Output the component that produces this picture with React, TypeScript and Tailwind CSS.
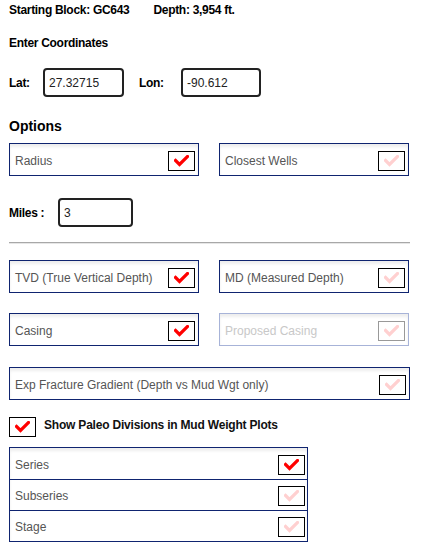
import React from "react";

const font = { fontFamily: '"Liberation Sans", Arial, sans-serif' };

function Check({ on, faded }: { on: boolean; faded?: boolean }) {
  return (
    <div
      className={`w-[27px] h-[20px] border flex items-center justify-center bg-white shrink-0 ${
        faded ? "border-[#999]" : "border-black"
      }`}
    >
      <svg width="15" height="12" viewBox="0 0 15 12">
        <polyline
          points="1.5,5.5 5.5,9.5 13.5,1.5"
          fill="none"
          stroke={on ? "#ff0000" : "#ffd0d0"}
          strokeWidth="3.2"
          strokeLinecap="square"
        />
      </svg>
    </div>
  );
}

function OptionBox({
  label,
  on,
  disabled,
  wide,
}: {
  label: string;
  on: boolean;
  disabled?: boolean;
  wide?: boolean;
}) {
  return (
    <div
      className={`${wide ? "w-[401px]" : "w-[190px]"} h-[33px] border flex items-center justify-between pl-[5px] pr-[3px] pt-[3px] shadow-[inset_0_3px_3px_rgba(0,0,0,0.07)] ${
        disabled ? "border-[#a7b3d8]" : "border-[#0f2470]"
      }`}
    >
      <span className={`text-[12px] ${disabled ? "text-[#c8c8c8]" : "text-[#555]"}`}>{label}</span>
      <Check on={on} faded={disabled} />
    </div>
  );
}

function Input({ value, w }: { value: string; w: string }) {
  return (
    <div className={`${w} h-[29px] border-2 border-[#222] rounded-[4px] flex items-center px-[4px] text-[12px] font-normal tracking-normal text-[#222]`}>
      {value}
    </div>
  );
}

export default function App() {
  return (
    <div className="w-[438px] h-[545px] bg-white pl-[9px] text-black overflow-hidden" style={font}>
      <div className="h-5 flex items-center text-[12px] font-bold tracking-[-0.3px]">
        <span>Starting Block: GC643</span>
        <span className="ml-[24px]">Depth: 3,954 ft.</span>
      </div>
      <div className="mt-[13px] h-5 flex items-center text-[12px] font-bold tracking-[-0.3px]">Enter Coordinates</div>

      <div className="mt-[15px] flex items-center text-[12px] font-bold tracking-[-0.3px]">
        <span className="w-[34px]">Lat:</span>
        <Input value="27.32715" w="w-[81px]" />
        <span className="ml-[15px] w-[42px]">Lon:</span>
        <Input value="-90.612" w="w-[80px]" />
      </div>

      <div className="mt-[19px] h-5 flex items-center text-[14px] font-bold">Options</div>

      <div className="mt-[7px] flex gap-[20px]">
        <OptionBox label="Radius" on />
        <OptionBox label="Closest Wells" on={false} />
      </div>

      <div className="mt-[22px] flex items-center text-[12px] font-bold tracking-[-0.3px]">
        <span className="w-[49px]">Miles :</span>
        <Input value="3" w="w-[75px]" />
      </div>

      <div className="mt-[15px] w-[401px] h-[2px] bg-[#a8a8a8] border-b border-[#e6e6e6]" />

      <div className="mt-[16px] flex gap-[20px]">
        <OptionBox label="TVD (True Vertical Depth)" on />
        <OptionBox label="MD (Measured Depth)" on={false} />
      </div>

      <div className="mt-[20px] flex gap-[20px]">
        <OptionBox label="Casing" on />
        <OptionBox label="Proposed Casing" on={false} disabled />
      </div>

      <div className="mt-[21px]">
        <OptionBox label="Exp Fracture Gradient (Depth vs Mud Wgt only)" on={false} wide />
      </div>

      <div className="mt-[17px] flex items-center">
        <Check on />
        <span className="ml-[8px] text-[12px] font-bold text-[#111] tracking-[-0.2px] -mt-[5px]">
          Show Paleo Divisions in Mud Weight Plots
        </span>
      </div>

      <div className="mt-[10px] w-[299px] border border-[#0f2470] shadow-[inset_0_3px_3px_rgba(0,0,0,0.07)]">
        {[
          { label: "Series", on: true },
          { label: "Subseries", on: false },
          { label: "Stage", on: false },
        ].map((r, i) => (
          <div
            key={r.label}
            className={`h-[31px] flex items-center justify-between pl-[5px] pr-[2px] pt-[2px] ${
              i > 0 ? "border-t border-[#0f2470]" : ""
            }`}
          >
            <span className="text-[12px] text-[#555]">{r.label}</span>
            <Check on={r.on} />
          </div>
        ))}
      </div>
    </div>
  );
}
